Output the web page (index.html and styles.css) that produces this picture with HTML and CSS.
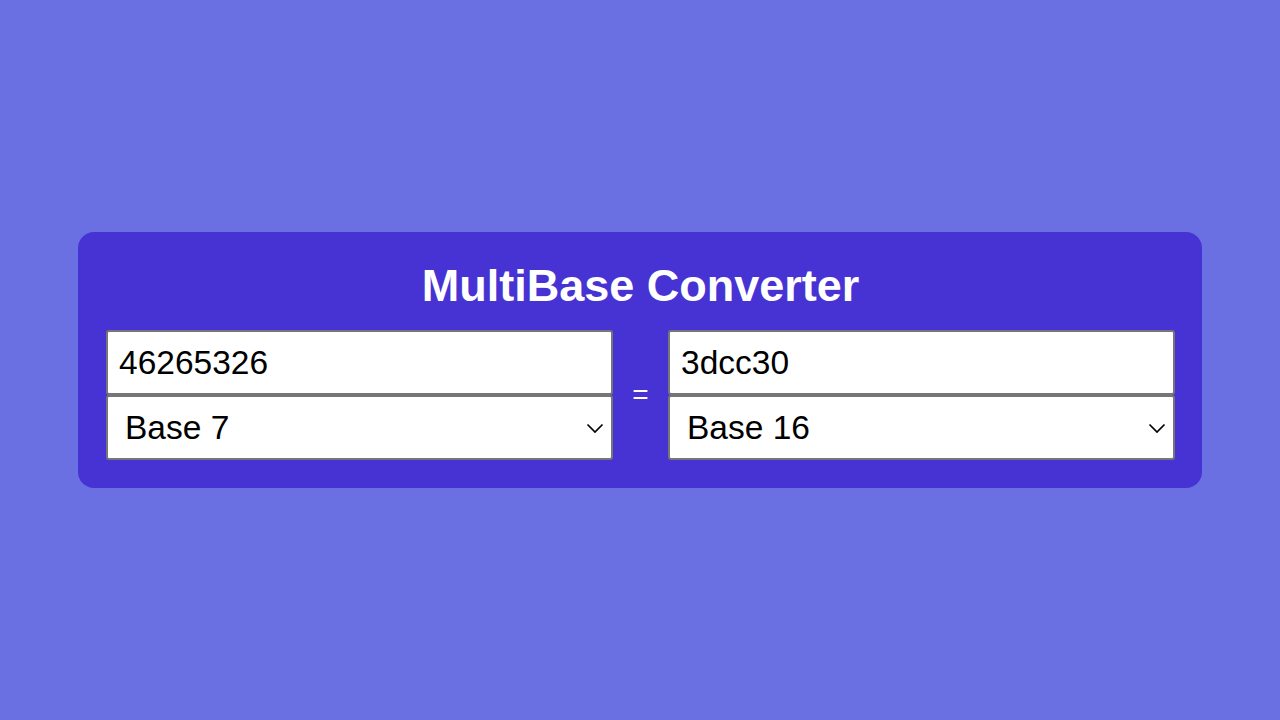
FILE: index.html
```html
<!DOCTYPE html>
<html lang="en">
<head>
<meta charset="utf-8">
<title>MultiBase Converter</title>
<link rel="stylesheet" href="styles.css">
</head>
<body>
<main class="page">
  <section class="card">
    <h1 class="title">MultiBase Converter</h1>
    <div class="row">
      <div class="col">
        <input class="field" type="text" value="46265326">
        <div class="select">
          <span class="select-label">Base 7</span>
          <svg class="chev" width="18" height="11" viewBox="0 0 18 11"><path d="M1.5 1.5 L9 9 L16.5 1.5" fill="none" stroke="#000" stroke-width="1.7"/></svg>
        </div>
      </div>
      <div class="eq">=</div>
      <div class="col">
        <input class="field" type="text" value="3dcc30">
        <div class="select">
          <span class="select-label">Base 16</span>
          <svg class="chev" width="18" height="11" viewBox="0 0 18 11"><path d="M1.5 1.5 L9 9 L16.5 1.5" fill="none" stroke="#000" stroke-width="1.7"/></svg>
        </div>
      </div>
    </div>
  </section>
</main>
</body>
</html>
```

FILE: styles.css
```css
html, body {
  margin: 0;
  padding: 0;
  height: 100%;
}
body {
  background: #6a6fe1;
  font-family: "Liberation Sans", Arial, sans-serif;
}
.page {
  height: 720px;
  display: flex;
  align-items: center;
  justify-content: center;
}
.card {
  width: 1124px;
  box-sizing: border-box;
  background: #4733d3;
  border-radius: 16px;
  padding: 28px 27px 28px 28px;
}
.title {
  margin: 0 0 18px;
  color: #fff;
  font-size: 45px;
  font-weight: bold;
  text-align: center;
  line-height: 52px;
}
.row {
  display: flex;
  align-items: center;
}
.col {
  flex: 1;
  display: flex;
  flex-direction: column;
}
.eq {
  width: 55px;
  text-align: center;
  color: #fff;
  font-size: 28px;
}
.field {
  box-sizing: border-box;
  height: 65px;
  border: 2px solid #767676;
  border-radius: 3px;
  background: #fff;
  font-family: "Liberation Sans", Arial, sans-serif;
  font-size: 33.5px;
  padding: 0 11px;
  color: #000;
  outline: none;
}
.select {
  box-sizing: border-box;
  height: 65px;
  border: 2px solid #767676;
  border-radius: 3px;
  background: #fff;
  display: flex;
  align-items: center;
  justify-content: space-between;
  padding: 0 7px 0 17px;
  font-size: 33.5px;
  color: #000;
}
.chev {
  display: block;
  margin-top: 1px;
}
```
